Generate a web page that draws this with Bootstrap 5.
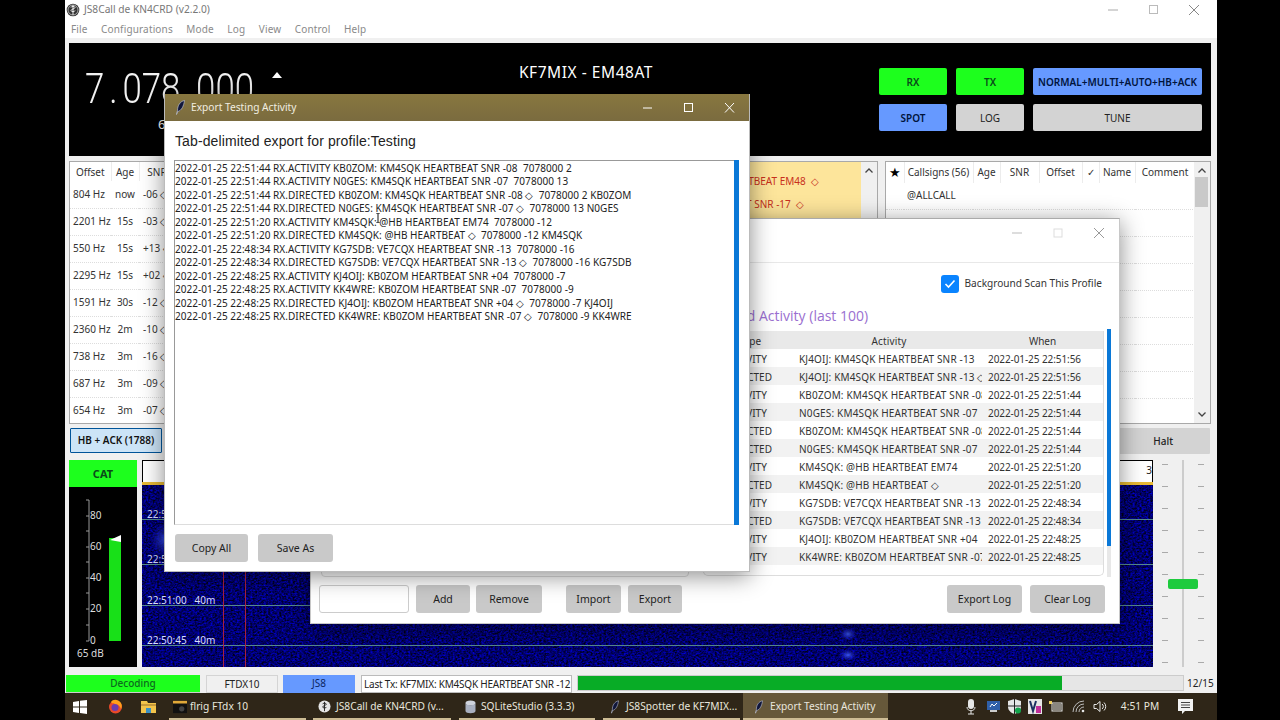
<!DOCTYPE html>
<html lang="en">
<head>
<meta charset="utf-8">
<title>JS8Call</title>
<link href="https://cdn.jsdelivr.net/npm/bootstrap@5.3.0/dist/css/bootstrap.min.css" rel="stylesheet">
<style>
html,body{margin:0;height:720px;width:1280px;overflow:hidden;background:#000;}
body{font-family:"Noto Sans","Open Sans",sans-serif;font-size:10px;color:#222;}
.desk{width:1152px;height:720px;margin-left:65px;display:flex;flex-direction:column;}
.mainwin{position:relative;height:693px;background:#f0f0f0;display:flex;flex-direction:column;flex:none;}
.ttl{height:20px;padding-left:1px;color:#777;font-size:10.2px;background:#fff;}
.mnu{height:18px;padding-left:6px;gap:13.5px;color:#8a8a8a;font-size:10px;letter-spacing:.15px;background:#fff;}
.wctl{margin-left:auto;margin-right:17px;gap:27px;}
.freq{height:113px;margin:5px 6px 0 4px;background:#000;color:#fff;}
.lcdrow{display:flex;}
.lcd{font-family:Roboto,sans-serif;font-weight:300;font-size:43px;line-height:44px;word-spacing:9px;width:187px;flex:none;transform:scaleX(.81);transform-origin:left top;white-space:nowrap;color:#f2f2f2;}
.ldot{margin:0 6px;}
.lcdcol{padding:23px 0 0 16px;width:230px;flex:none;}
.arrow{width:0;height:0;border-left:5px solid transparent;border-right:5px solid transparent;border-bottom:6px solid #fff;margin-top:6px;}
.sub6{font-size:13px;margin:6px 0 0 73px;line-height:16px;}
.call{flex:1;text-align:center;font-size:15.5px;letter-spacing:.55px;padding-top:19px;padding-right:6px;line-height:20px;}
.ctlgrid{display:grid;grid-template-columns:68px 68px 169px;grid-auto-rows:27px;column-gap:9px;row-gap:9px;padding:25px 9px 0 0;flex:none;}
.rbtn{--bs-btn-padding-x:0;--bs-btn-padding-y:0;--bs-btn-font-size:10px;--bs-btn-border-radius:2px;border:0;font-weight:600;color:#123;white-space:nowrap;padding-top:2px;}
.gbtn{background:#1dff1d;color:#0a4a1a;}
.bbtn{background:#6699ff;color:#00143c;}
.pbtn{background:#d3d3d3;color:#222;font-weight:400;}
.midrow{height:263px;margin:5px 6px 0 4px;}
.tblwrap{border:1px solid #a9a9a9;background:#fff;position:relative;overflow:hidden;}
.lefttb{width:156px;flex:none;}
.righttb{flex:1 1 0;min-width:0;margin-left:7px;}
table.sheet{--bs-table-bg:transparent;margin:0;table-layout:fixed;font-size:10px;color:#333;}
.righttb table.sheet{width:309px;}
table.sheet th{font-weight:400;text-align:center;vertical-align:middle;padding:1px 0 0 0;height:19px;border:0;border-right:1px solid #ececec;white-space:nowrap;overflow:hidden;}
table.sheet td{padding:0 0 0 3px;height:27px;vertical-align:middle;border:0;border-bottom:1px dotted #ddd;white-space:nowrap;overflow:hidden;}
table.sheet td.ctr{padding:0;text-align:center;}
table.sheet td.snr{padding-left:4px;}
.starh{font-size:13px;color:#000;}
.sbar{position:absolute;right:0;top:0;bottom:0;width:16px;background:#f0f0f0;color:#444;}
.chev{position:absolute;left:4px;width:8px;height:5px;}
.thumb{position:absolute;left:1px;right:2px;top:15px;height:30px;background:#c9c9c9;}
.yell{width:653px;flex:none;position:relative;background:#f0f0f0;border:1px solid #a9a9a9;border-width:1px 1px 1px 0;}
.yfill{position:absolute;inset:0 15px 0 0;background:#fde59b;color:#c8301c;font-size:10px;text-align:right;padding:8px 0 0 0;line-height:23px;white-space:pre;}
.yl1{padding-right:43px;}
.yl2{padding-right:58px;}
.toprow{height:27px;margin:4px 7px 0 5px;}
.hbbtn{--bs-btn-padding-x:0;--bs-btn-padding-y:0;--bs-btn-font-size:10px;--bs-btn-border-radius:1px;width:92px;height:25px;background:#cce4f7;border:1px solid #005499;color:#111;font-weight:600;}
.halt{--bs-btn-padding-x:0;--bs-btn-padding-y:0;--bs-btn-font-size:10px;--bs-btn-border-radius:1px;margin-left:auto;width:200px;height:26px;background:#d3d3d3;border:0;color:#222;text-align:right;padding-right:37px;font-weight:500;}
.wfrow{height:207px;margin:5px 0 0 4px;gap:5px;}
.catcol{width:68px;flex:none;background:#000;display:flex;flex-direction:column;}
.catbtn{height:27px;background:#1dff1d;color:#0a4a1a;font-weight:700;font-size:11px;line-height:27px;text-align:center;}
.wf{flex:1;position:relative;overflow:hidden;background:#00007d;}
.wfscale{height:22px;background:#fff;border:1px solid #000;border-bottom:0;text-align:right;line-height:18px;color:#222;}
.wfy{height:3px;background:#e7b934;}
.wfart{position:absolute;left:0;top:25px;width:100%;height:182px;display:block;}
.tstamp{position:absolute;left:5px;color:#d9ddff;font-size:10px;line-height:12px;white-space:pre;}
.slidecol{width:59px;flex:none;}
.statrow{height:18px;margin:8px 0 0 1px;}
.st{height:18px;text-align:center;line-height:17px;font-size:10px;flex:none;}
.dec{width:134px;background:#1dff1d;color:#0c6a1d;font-weight:500;border:1px solid #ccc;border-width:0 0 1px 0;}
.ftd{width:72px;margin-left:6px;background:#f0f0f0;border:1px solid #d4d4d4;color:#222;}
.js8{width:72px;margin-left:5px;background:#6699ff;color:#0b2560;}
.lasttx{width:211px;margin-left:6px;background:#fff;border:1px solid #bbb;text-align:left;padding-left:2px;color:#222;white-space:nowrap;letter-spacing:-.22px;overflow:hidden;}
.progress.txp{--bs-progress-height:16px;--bs-progress-bg:#e6e6e6;--bs-progress-bar-bg:#08ac26;--bs-progress-border-radius:0;width:607px;margin-left:5px;flex:none;border:1px solid #ccc;}
.frac{margin-left:3px;font-size:10px;line-height:17px;}
.tbar{height:27px;flex:none;background:#2f2618;color:#e9e6de;font-size:10.2px;position:relative;}
.tic{flex:none;height:27px;display:flex;align-items:center;justify-content:center;}
.task{height:27px;flex:none;padding:2px 0 0 5px;border-bottom:2px solid #cdbc94;gap:5px;white-space:nowrap;overflow:hidden;}
.task.on{background:#66583a;}
.tray{margin-left:auto;gap:0;}
.clock{font-size:10.2px;width:60px;text-align:center;margin-right:7px;}
.win{position:absolute;background:#fff;box-shadow:0 4px 22px rgba(0,0,0,.45);}
.prof{left:245px;top:218px;width:810px;height:406px;border:1px solid #c8c8c8;border-top-color:#aaa;}
.prfhead{height:44px;border-bottom:1px solid #e8e8e8;position:relative;}
.wbtn{position:absolute;top:9px;}
.prfbody{position:relative;height:360px;}
.ckrow{position:absolute;right:17px;top:12px;gap:6px;font-size:10.1px;color:#333;}
.ckbox{width:18px;height:18px;border-radius:3px;background:#0a84ff;}
.acttitle{position:absolute;left:397px;top:43px;font-family:"Open Sans",sans-serif;font-size:14px;color:#9a6fd0;line-height:20px;white-space:nowrap;}
.acttbl{position:absolute;left:392px;top:68px;width:401px;height:245px;border:1px solid #ddd;border-top:0;border-radius:0 0 5px 5px;}
.actrow{display:grid;grid-template-columns:92px 186px 121px;height:18px;line-height:18px;font-size:10px;white-space:nowrap;color:#333;}
.actrow>div{overflow:hidden;padding:1px 0 0 6px;}
.actrow>div:nth-child(2){letter-spacing:.16px;padding-left:3px;}
.actrow>div:last-child{letter-spacing:-.08px;}
.actrow.hd{background:#e9e9e9;text-align:center;}
.actrow.hd>div{padding-left:0;}
.actrow.alt{background:#f2f2f2;}
.ascr{position:absolute;left:796px;top:66px;width:4px;height:248px;background:#e8e8e8;}
.ascr::before{content:"";display:block;height:217px;background:#0a78d7;}
.leftpane{position:absolute;left:10px;top:40px;width:368px;height:274px;border:1px solid #ddd;border-radius:4px;}
.prfctl{position:absolute;left:8px;right:14px;top:322px;gap:6px;}
.gb{--bs-btn-padding-x:0;--bs-btn-padding-y:0;--bs-btn-font-size:10.5px;--bs-btn-border-radius:3px;--bs-btn-color:#222;height:28px;background:#c9c9c9;border:0;flex:none;color:#222;padding-top:1px;}
.inpt{width:90px;height:28px;border:1px solid #ccc;border-radius:3px;background:#fff;flex:none;}
.expw{left:99px;top:94px;width:586px;height:478px;border:1px solid #bbb;border-top:0;}
.exph{height:27px;background:linear-gradient(#88773f,#7a6b3f);color:#f1eee0;font-size:10.2px;position:relative;padding-left:11px;gap:6px;}
.expbody{position:relative;height:451px;padding:10px 10px 0 9px;}
.exptitle{font-family:"Liberation Sans",sans-serif;font-size:14px;letter-spacing:.11px;line-height:20px;color:#222;height:29px;padding-left:1px;}
.exparea{width:560px;height:365px;border:1px solid #ddd;border-top-color:#999;border-left-color:#999;border-right:0;padding:1px 0 0 0;}
.expline{font-size:10px;letter-spacing:.05px;line-height:13.45px;white-space:pre;color:#222;}
.bluebar{position:absolute;left:569px;top:39px;width:5px;height:365px;background:#0a78d7;}
.expctl{gap:10px;margin-top:9px;padding-left:1px;}
.cursor{position:absolute;left:211px;top:119px;width:4px;height:10px;}
</style>
</head>
<body>
<div class="desk">
 <div class="mainwin">
  <div class="ttl d-flex align-items-center gap-1">
   <svg width="14" height="14" viewBox="0 0 14 14"><circle cx="7" cy="7" r="6.3" fill="#333"/><circle cx="7" cy="7" r="5" fill="none" stroke="#ddd" stroke-width=".7"/><path d="M7 2v10M5 4.500c0-1.500 4-1.500 4 0S5 6 5 7.500s4 1.500 4 0" fill="none" stroke="#eee" stroke-width="1"/></svg>
   <span>JS8Call de KN4CRD (v2.2.0)</span>
   <div class="wctl d-flex align-items-center">
    <svg width="14" height="10"><path d="M2 5h10" stroke="#aaa"/></svg>
    <svg width="14" height="10"><rect x="2.500" y=".5" width="8" height="8" fill="none" stroke="#bbb"/></svg>
    <svg width="12" height="10"><path d="M1 0l10 10M11 0 1 10" stroke="#888"/></svg>
   </div>
  </div>
  <div class="mnu d-flex align-items-center"><span>File</span><span>Configurations</span><span>Mode</span><span>Log</span><span>View</span><span>Control</span><span>Help</span></div>
  <div class="freq d-flex">
   <div class="lcdcol">
    <div class="lcdrow"><div class="lcd">7<span class="ldot">.</span>078 000</div><div class="arrow"></div></div>
    <div class="sub6">6</div>
   </div>
   <div class="call">KF7MIX - EM48AT</div>
   <div class="ctlgrid">
    <button class="btn rbtn gbtn">RX</button><button class="btn rbtn gbtn">TX</button><button class="btn rbtn bbtn">NORMAL+MULTI+AUTO+HB+ACK</button>
    <button class="btn rbtn bbtn">SPOT</button><button class="btn rbtn pbtn">LOG</button><button class="btn rbtn pbtn">TUNE</button>
   </div>
  </div>
  <div class="midrow d-flex">
   <div class="tblwrap lefttb">
    <table class="table sheet"><colgroup><col style="width:41px"><col style="width:28px"><col style="width:36px"><col></colgroup>
     <thead><tr><th>Offset</th><th>Age</th><th>SNR</th><th></th></tr></thead>
     <tbody>
      <tr><td>804 Hz</td><td class="ctr">now</td><td class="snr">-06 ◇</td><td></td></tr>
      <tr><td>2201 Hz</td><td class="ctr">15s</td><td class="snr">-03 ◇</td><td></td></tr>
      <tr><td>550 Hz</td><td class="ctr">15s</td><td class="snr">+13 ◇</td><td></td></tr>
      <tr><td>2295 Hz</td><td class="ctr">15s</td><td class="snr">+02 ◇</td><td></td></tr>
      <tr><td>1591 Hz</td><td class="ctr">30s</td><td class="snr">-12 ◇</td><td></td></tr>
      <tr><td>2360 Hz</td><td class="ctr">2m</td><td class="snr">-10 ◇</td><td></td></tr>
      <tr><td>738 Hz</td><td class="ctr">3m</td><td class="snr">-16 ◇</td><td></td></tr>
      <tr><td>687 Hz</td><td class="ctr">3m</td><td class="snr">-09 ◇</td><td></td></tr>
      <tr><td>654 Hz</td><td class="ctr">3m</td><td class="snr">-07 ◇</td><td></td></tr>
     </tbody>
    </table>
   </div>
   <div class="yell">
    <div class="yfill"><div class="yl1">KM4SQK: KN4CRD HEARTBEAT EM48  ◇</div><div class="yl2">KF7MIX: KM4SQK HEARTBEAT SNR -17  ◇</div></div>
    <div class="sbar"><svg class="chev" style="top:6px" viewBox="0 0 8 5"><path d="M.5 4.500 4 1l3.500 3.500" fill="none" stroke="#444" stroke-width="1.300"/></svg></div>
   </div>
   <div class="tblwrap righttb">
    <table class="table sheet"><colgroup><col style="width:18px"><col style="width:69px"><col style="width:27px"><col style="width:39px"><col style="width:43px"><col style="width:17px"><col style="width:36px"><col style="width:60px"></colgroup>
     <thead><tr><th class="starh">★</th><th>Callsigns (56)</th><th>Age</th><th>SNR</th><th>Offset</th><th>✓</th><th>Name</th><th>Comment</th></tr></thead>
     <tbody>
      <tr><td></td><td>@ALLCALL</td><td></td><td></td><td></td><td></td><td></td><td></td></tr>
      <tr><td></td><td>@BEE</td><td></td><td></td><td></td><td></td><td></td><td></td></tr>
      <tr><td colspan="8">&nbsp;</td></tr><tr><td colspan="8">&nbsp;</td></tr><tr><td colspan="8">&nbsp;</td></tr><tr><td colspan="8">&nbsp;</td></tr><tr><td colspan="8">&nbsp;</td></tr><tr><td colspan="8">&nbsp;</td></tr><tr><td colspan="8">&nbsp;</td></tr>
     </tbody>
    </table>
    <div class="sbar"><svg class="chev" style="top:6px" viewBox="0 0 8 5"><path d="M.5 4.500 4 1l3.500 3.500" fill="none" stroke="#444" stroke-width="1.300"/></svg><div class="thumb"></div><svg class="chev" style="bottom:6px" viewBox="0 0 8 5"><path d="M.5.500 4 4 7.500.5" fill="none" stroke="#444" stroke-width="1.300"/></svg></div>
   </div>
  </div>
  <div class="toprow d-flex"><button class="btn hbbtn">HB + ACK (1788)</button><button class="btn halt">Halt</button></div>
  <div class="wfrow d-flex">
   <div class="catcol">
    <div class="catbtn">CAT</div>
    <svg width="68" height="180" viewBox="0 0 68 180" font-family="Noto Sans, sans-serif" font-size="10" fill="#ddd">
     <path d="M20 13v141M17 13h3M17 29h3M17 44h3M17 60h3M17 75h3M17 91h3M17 106h3M17 122h3M17 138h3M17 154h3" stroke="#999" fill="none"/>
     <text x="21" y="32">80</text><text x="21" y="63">60</text><text x="21" y="94">40</text><text x="21" y="125">20</text><text x="21" y="157">0</text>
     <rect x="40" y="51" width="12" height="103" fill="#18e018"/><path d="M41 53l11-5v7z" fill="#fff"/>
     <text x="8" y="170">65 dB</text>
    </svg>
   </div>
   <div class="wf">
    <div class="wfscale">3</div><div class="wfy"></div>
    <svg class="wfart" preserveAspectRatio="none" viewBox="0 0 1011 182">
     <defs>
      <filter id="nz" x="0" y="0" width="100%" height="100%" color-interpolation-filters="sRGB"><feTurbulence type="fractalNoise" baseFrequency=".45 .6" numOctaves="2" seed="4"/><feColorMatrix values="0 0 0 0 0  0 0 0 0 0  1.500 0 0 0 -.32  0 0 0 0 1"/></filter>
      <radialGradient id="spot"><stop offset="0" stop-color="#3a58f0"/><stop offset="1" stop-color="#1a1ac0" stop-opacity="0"/></radialGradient>
     </defs>
     <rect width="1011" height="182" fill="#000070"/>
     <rect width="1011" height="182" filter="url(#nz)" opacity=".85"/>
     <ellipse cx="24" cy="55" rx="16" ry="18" fill="url(#spot)"/>
     <ellipse cx="706" cy="149" rx="9" ry="7" fill="url(#spot)"/><ellipse cx="706" cy="170" rx="9" ry="6" fill="url(#spot)"/>
     <path d="M0 34.500h1011M0 79.500h1011M0 120.500h1011M0 160.500h1011" stroke="#568a8c" stroke-width="1"/>
     <path d="M81.500 0v182M103.500 0v182" stroke="#a82040" stroke-width="1"/>
    </svg>
    <div class="tstamp" style="top:48px">22:51:30</div>
    <div class="tstamp" style="top:93px">22:51:15</div>
    <div class="tstamp" style="top:134px">22:51:00   40m</div>
    <div class="tstamp" style="top:174px">22:50:45   40m</div>
   </div>
   <div class="slidecol">
    <svg width="59" height="207" viewBox="0 0 59 207"><path d="M25 0v207" stroke="#ccc" stroke-width="2"/><path d="M4 4.500h6M4 26.500h6M4 48.500h6M4 70.500h6M4 92.500h6M4 114.500h6M4 136.500h6M4 158.500h6M4 180.500h6M4 202.500h6M40 4.500h6M40 26.500h6M40 48.500h6M40 70.500h6M40 92.500h6M40 114.500h6M40 136.500h6M40 158.500h6M40 180.500h6M40 202.500h6" stroke="#aaa"/><rect x="10" y="119" width="30" height="10" rx="2" fill="#1ecb3e"/></svg>
   </div>
  </div>
  <div class="statrow d-flex">
   <div class="st dec">Decoding</div><div class="st ftd">FTDX10</div><div class="st js8">JS8</div>
   <div class="st lasttx">Last Tx: KF7MIX: KM4SQK HEARTBEAT SNR -12</div>
   <div class="progress txp"><div class="progress-bar" style="width:80%"></div></div>
   <div class="frac">12/15</div>
  </div>

  <div class="win prof">
   <div class="prfhead">
    <svg class="wbtn" style="left:699px" width="14" height="10"><path d="M2 5h10" stroke="#bbb"/></svg>
    <svg class="wbtn" style="left:741px" width="14" height="10"><rect x="2" y="1" width="8" height="8" fill="none" stroke="#ddd"/></svg>
    <svg class="wbtn" style="left:782px" width="12" height="10"><path d="M1 0l10 10M11 0 1 10" stroke="#999"/></svg>
   </div>
   <div class="prfbody">
    <div class="ckrow d-flex align-items-center">
     <div class="ckbox d-flex align-items-center justify-content-center"><svg width="12" height="10" viewBox="0 0 12 10"><path d="M1.500 5l3 3 6-6.500" fill="none" stroke="#fff" stroke-width="1.600"/></svg></div>
     <span>Background Scan This Profile</span>
    </div>
    <div class="leftpane"></div>
    <div class="acttitle">Logged Activity (last 100)</div>
    <div class="acttbl">
     <div class="actrow hd"><div>Type</div><div>Activity</div><div>When</div></div>
     <div class="actrow"><div>RX.ACTIVITY</div><div>KJ4OIJ: KM4SQK HEARTBEAT SNR -13</div><div>2022-01-25 22:51:56</div></div>
     <div class="actrow alt"><div>RX.DIRECTED</div><div>KJ4OIJ: KM4SQK HEARTBEAT SNR -13 ◇</div><div>2022-01-25 22:51:56</div></div>
     <div class="actrow"><div>RX.ACTIVITY</div><div>KB0ZOM: KM4SQK HEARTBEAT SNR -08</div><div>2022-01-25 22:51:44</div></div>
     <div class="actrow alt"><div>RX.ACTIVITY</div><div>N0GES: KM4SQK HEARTBEAT SNR -07</div><div>2022-01-25 22:51:44</div></div>
     <div class="actrow"><div>RX.DIRECTED</div><div>KB0ZOM: KM4SQK HEARTBEAT SNR -08</div><div>2022-01-25 22:51:44</div></div>
     <div class="actrow alt"><div>RX.DIRECTED</div><div>N0GES: KM4SQK HEARTBEAT SNR -07</div><div>2022-01-25 22:51:44</div></div>
     <div class="actrow"><div>RX.ACTIVITY</div><div>KM4SQK: @HB HEARTBEAT EM74</div><div>2022-01-25 22:51:20</div></div>
     <div class="actrow alt"><div>RX.DIRECTED</div><div>KM4SQK: @HB HEARTBEAT ◇</div><div>2022-01-25 22:51:20</div></div>
     <div class="actrow"><div>RX.ACTIVITY</div><div>KG7SDB: VE7CQX HEARTBEAT SNR -13</div><div>2022-01-25 22:48:34</div></div>
     <div class="actrow alt"><div>RX.DIRECTED</div><div>KG7SDB: VE7CQX HEARTBEAT SNR -13</div><div>2022-01-25 22:48:34</div></div>
     <div class="actrow"><div>RX.ACTIVITY</div><div>KJ4OIJ: KB0ZOM HEARTBEAT SNR +04</div><div>2022-01-25 22:48:25</div></div>
     <div class="actrow alt"><div>RX.ACTIVITY</div><div>KK4WRE: KB0ZOM HEARTBEAT SNR -07</div><div>2022-01-25 22:48:25</div></div>
    </div>
    <div class="ascr"></div>
    <div class="prfctl d-flex">
     <div class="inpt"></div>
     <button class="btn gb" style="width:54px;margin-left:1px">Add</button>
     <button class="btn gb" style="width:66px">Remove</button>
     <button class="btn gb" style="width:55px;margin-left:18px">Import</button>
     <button class="btn gb" style="width:54px;margin-left:1px">Export</button>
     <button class="btn gb ms-auto" style="width:75px">Export Log</button>
     <button class="btn gb" style="width:75px;margin-left:2px">Clear Log</button>
    </div>
   </div>
  </div>

  <div class="win expw">
   <div class="exph d-flex align-items-center">
    <svg width="9" height="15" viewBox="0 0 9 15"><path d="M8.500.500C4 1.500 1.500 5.500 1.500 10.500l-1 4 1.200-3c4-1 6-5.500 6.800-11z" fill="#10163a" stroke="#c9d0e8" stroke-width=".6"/></svg>
    <span>Export Testing Activity</span>
    <svg class="wbtn" style="left:477px" width="12" height="10"><path d="M1 5h9" stroke="#fff"/></svg>
    <svg class="wbtn" style="left:518px" width="12" height="10"><rect x="1.500" y=".5" width="8" height="8" fill="none" stroke="#fff"/></svg>
    <svg class="wbtn" style="left:559px" width="12" height="10"><path d="M1 0l9 9.500M10 0 1 9.500" stroke="#fff"/></svg>
   </div>
   <div class="expbody">
    <div class="exptitle">Tab-delimited export for profile:Testing</div>
    <div class="exparea">
<div class="expline">2022-01-25 22:51:44 RX.ACTIVITY KB0ZOM: KM4SQK HEARTBEAT SNR -08  7078000 2</div>
<div class="expline">2022-01-25 22:51:44 RX.ACTIVITY N0GES: KM4SQK HEARTBEAT SNR -07  7078000 13</div>
<div class="expline">2022-01-25 22:51:44 RX.DIRECTED KB0ZOM: KM4SQK HEARTBEAT SNR -08 ◇  7078000 2 KB0ZOM</div>
<div class="expline">2022-01-25 22:51:44 RX.DIRECTED N0GES: KM4SQK HEARTBEAT SNR -07 ◇  7078000 13 N0GES</div>
<div class="expline">2022-01-25 22:51:20 RX.ACTIVITY KM4SQK: @HB HEARTBEAT EM74  7078000 -12</div>
<div class="expline">2022-01-25 22:51:20 RX.DIRECTED KM4SQK: @HB HEARTBEAT ◇  7078000 -12 KM4SQK</div>
<div class="expline">2022-01-25 22:48:34 RX.ACTIVITY KG7SDB: VE7CQX HEARTBEAT SNR -13  7078000 -16</div>
<div class="expline">2022-01-25 22:48:34 RX.DIRECTED KG7SDB: VE7CQX HEARTBEAT SNR -13 ◇  7078000 -16 KG7SDB</div>
<div class="expline">2022-01-25 22:48:25 RX.ACTIVITY KJ4OIJ: KB0ZOM HEARTBEAT SNR +04  7078000 -7</div>
<div class="expline">2022-01-25 22:48:25 RX.ACTIVITY KK4WRE: KB0ZOM HEARTBEAT SNR -07  7078000 -9</div>
<div class="expline">2022-01-25 22:48:25 RX.DIRECTED KJ4OIJ: KB0ZOM HEARTBEAT SNR +04 ◇  7078000 -7 KJ4OIJ</div>
<div class="expline">2022-01-25 22:48:25 RX.DIRECTED KK4WRE: KB0ZOM HEARTBEAT SNR -07 ◇  7078000 -9 KK4WRE</div>
    </div>
    <div class="bluebar"></div>
    <div class="expctl d-flex">
     <button class="btn gb" style="width:73px">Copy All</button>
     <button class="btn gb" style="width:75px">Save As</button>
    </div>
   </div>
   <svg class="cursor" viewBox="0 0 4 10"><path d="M0 0h4M0 10h4M2 0v10" stroke="#111" fill="none"/></svg>
  </div>
 </div>

 <div class="tbar d-flex align-items-center">
  <div class="tic" style="width:30px"><svg width="14" height="14" viewBox="0 0 14 14"><path d="M0 2l6-1v5.500H0zM7 .8 14 0v6.500H7zM0 7.500h6V13l-6-1zM7 7.500h7V14l-7-1z" fill="#fff"/></svg></div>
  <div class="tic" style="width:40px"><svg width="15" height="15" viewBox="0 0 15 15"><circle cx="7.500" cy="8" r="6.500" fill="#e8492a"/><circle cx="7" cy="8.500" r="3.500" fill="#6a3cb0"/><path d="M3 3c2-3 7-3 10 1 1 2 1 4 0 6-1-3-3-5-6-5-1-1-3 0-4-2z" fill="#ff9f1c"/></svg></div>
  <div class="tic" style="width:26px"><svg width="15" height="13" viewBox="0 0 15 13"><path d="M0 1h6l1 2h8v10H0z" fill="#f1c34b"/><rect y="4" x="0" width="15" height="2" fill="#c6993a"/><rect x="5" y="8" width="5" height="5" fill="#3a8fc4"/></svg></div>
  <div class="task d-flex align-items-center" style="width:137px;margin-left:8px;padding-left:4px"><svg width="14" height="14" viewBox="0 0 16 14"><rect width="16" height="14" fill="#111"/><rect width="16" height="3" fill="#e0a838"/><circle cx="10" cy="9" r="3" fill="#444"/></svg><span style="margin-left:-2px">flrig FTdx 10</span></div>
  <div class="task d-flex align-items-center" style="width:138px;margin-left:7px;padding-left:5px"><svg width="13" height="13" viewBox="0 0 14 14"><circle cx="7" cy="7" r="6.500" fill="#e6e6e6"/><path d="M7 2v10M5 4.500c0-1.500 4-1.500 4 0S5 6 5 7.500s4 1.500 4 0" fill="none" stroke="#222" stroke-width="1"/></svg><span>JS8Call de KN4CRD (v...</span></div>
  <div class="task d-flex align-items-center" style="width:136px;margin-left:8px;padding-left:6px"><svg width="11" height="14" viewBox="0 0 11 14"><ellipse cx="5.500" cy="3" rx="5" ry="2.500" fill="#cfd3dc"/><path d="M.5 3v8c0 3 10 3 10 0V3c0 3-10 3-10 0z" fill="#a9b0c0"/></svg><span>SQLiteStudio (3.3.3)</span></div>
  <div class="task d-flex align-items-center" style="width:137px;margin-left:8px;padding-left:8px"><svg width="8" height="14" viewBox="0 0 9 15"><path d="M8.500.500C4 1.500 1.500 5.500 1.500 10.500l-1 4 1.200-3c4-1 6-5.500 6.800-11z" fill="#10163a" stroke="#c9d0e8" stroke-width=".6"/></svg><span style="margin-left:2px">JS8Spotter de KF7MIX...</span></div>
  <div class="task on d-flex align-items-center" style="width:145px;margin-left:3px;padding-left:12px"><svg width="8" height="14" viewBox="0 0 9 15"><path d="M8.500.500C4 1.500 1.500 5.500 1.500 10.500l-1 4 1.200-3c4-1 6-5.500 6.800-11z" fill="#10163a" stroke="#c9d0e8" stroke-width=".6"/></svg><span style="margin-left:2px">Export Testing Activity</span></div>
  <div class="tray d-flex align-items-center">
   <div class="tic" style="width:23px"><svg width="10" height="16" viewBox="0 0 10 16"><rect x="2" y="0" width="6" height="10" rx="3" fill="#e6e6e6"/><path d="M1 8c0 5 8 5 8 0M5 12v3M2 15h6" stroke="#e6e6e6" fill="none"/></svg></div>
   <div class="tic" style="width:22px"><svg width="13" height="12" viewBox="0 0 13 12"><rect x="0" y="0" width="13" height="9" fill="#2f5fa8"/><rect x="3" y="9" width="7" height="2" fill="#ccc"/><path d="M3 6l2-3 2 2 3-3" stroke="#fff" fill="none"/></svg></div>
   <div class="tic" style="width:21px"><svg width="13" height="15" viewBox="0 0 13 15"><path d="M6.500 0 13 2v6c0 3-3 6-6.500 7C3 14 0 11 0 8V2z" fill="#e6e6e6"/><path d="M0 7h13" stroke="#222"/><path d="M6.500 0v15" stroke="#222"/><circle cx="10" cy="11.500" r="3" fill="#12a44c"/></svg></div>
   <div class="tic" style="width:20px"><svg width="14" height="15" viewBox="0 0 14 15"><rect width="14" height="15" fill="#e6e6e6"/><path d="M2 2l3 10 3-10" stroke="#1b2f60" stroke-width="2" fill="none"/><rect x="8" y="7" width="5" height="7" fill="#c0309a"/></svg></div>
   <div class="tic" style="width:21px"><svg width="14" height="11" viewBox="0 0 14 11"><rect x="3" y="2" width="10" height="8" fill="none" stroke="#e6e6e6"/><path d="M4 4h8M4 6h8M4 8h8" stroke="#e6e6e6"/><path d="M0 0h3v3H0z" fill="#f0d060"/></svg></div>
   <div class="tic" style="width:24px"><svg width="13" height="13" viewBox="0 0 13 13"><path d="M1 12A11 11 0 0 1 12 1M4 12A8 8 0 0 1 12 4M7 12a5 5 0 0 1 5-5" fill="none" stroke="#bbb"/><circle cx="11" cy="11" r="1.300" fill="#e6e6e6"/></svg></div>
   <div class="tic" style="width:20px"><svg width="15" height="13" viewBox="0 0 15 13"><path d="M1 4.500h2.500L7 1.500v10l-3.500-3H1z" fill="none" stroke="#e6e6e6"/><path d="M9 4a3 3 0 0 1 0 5M11 2.500a5.500 5.500 0 0 1 0 8" fill="none" stroke="#e6e6e6"/></svg></div>
   <div class="clock">4:51 PM</div>
   <div class="tic" style="width:17px"><svg width="15" height="16" viewBox="0 0 15 16"><path d="M0 0h15v12H7l-3 3v-3H0z" fill="#f2f2f2"/><path d="M3 3.500h9M3 6h9M3 8.500h9" stroke="#444"/></svg></div>
   <div style="width:23px"></div>
  </div>
 </div>
</div>
<script src="https://cdn.jsdelivr.net/npm/bootstrap@5.3.0/dist/js/bootstrap.bundle.min.js"></script>
</body>
</html>
